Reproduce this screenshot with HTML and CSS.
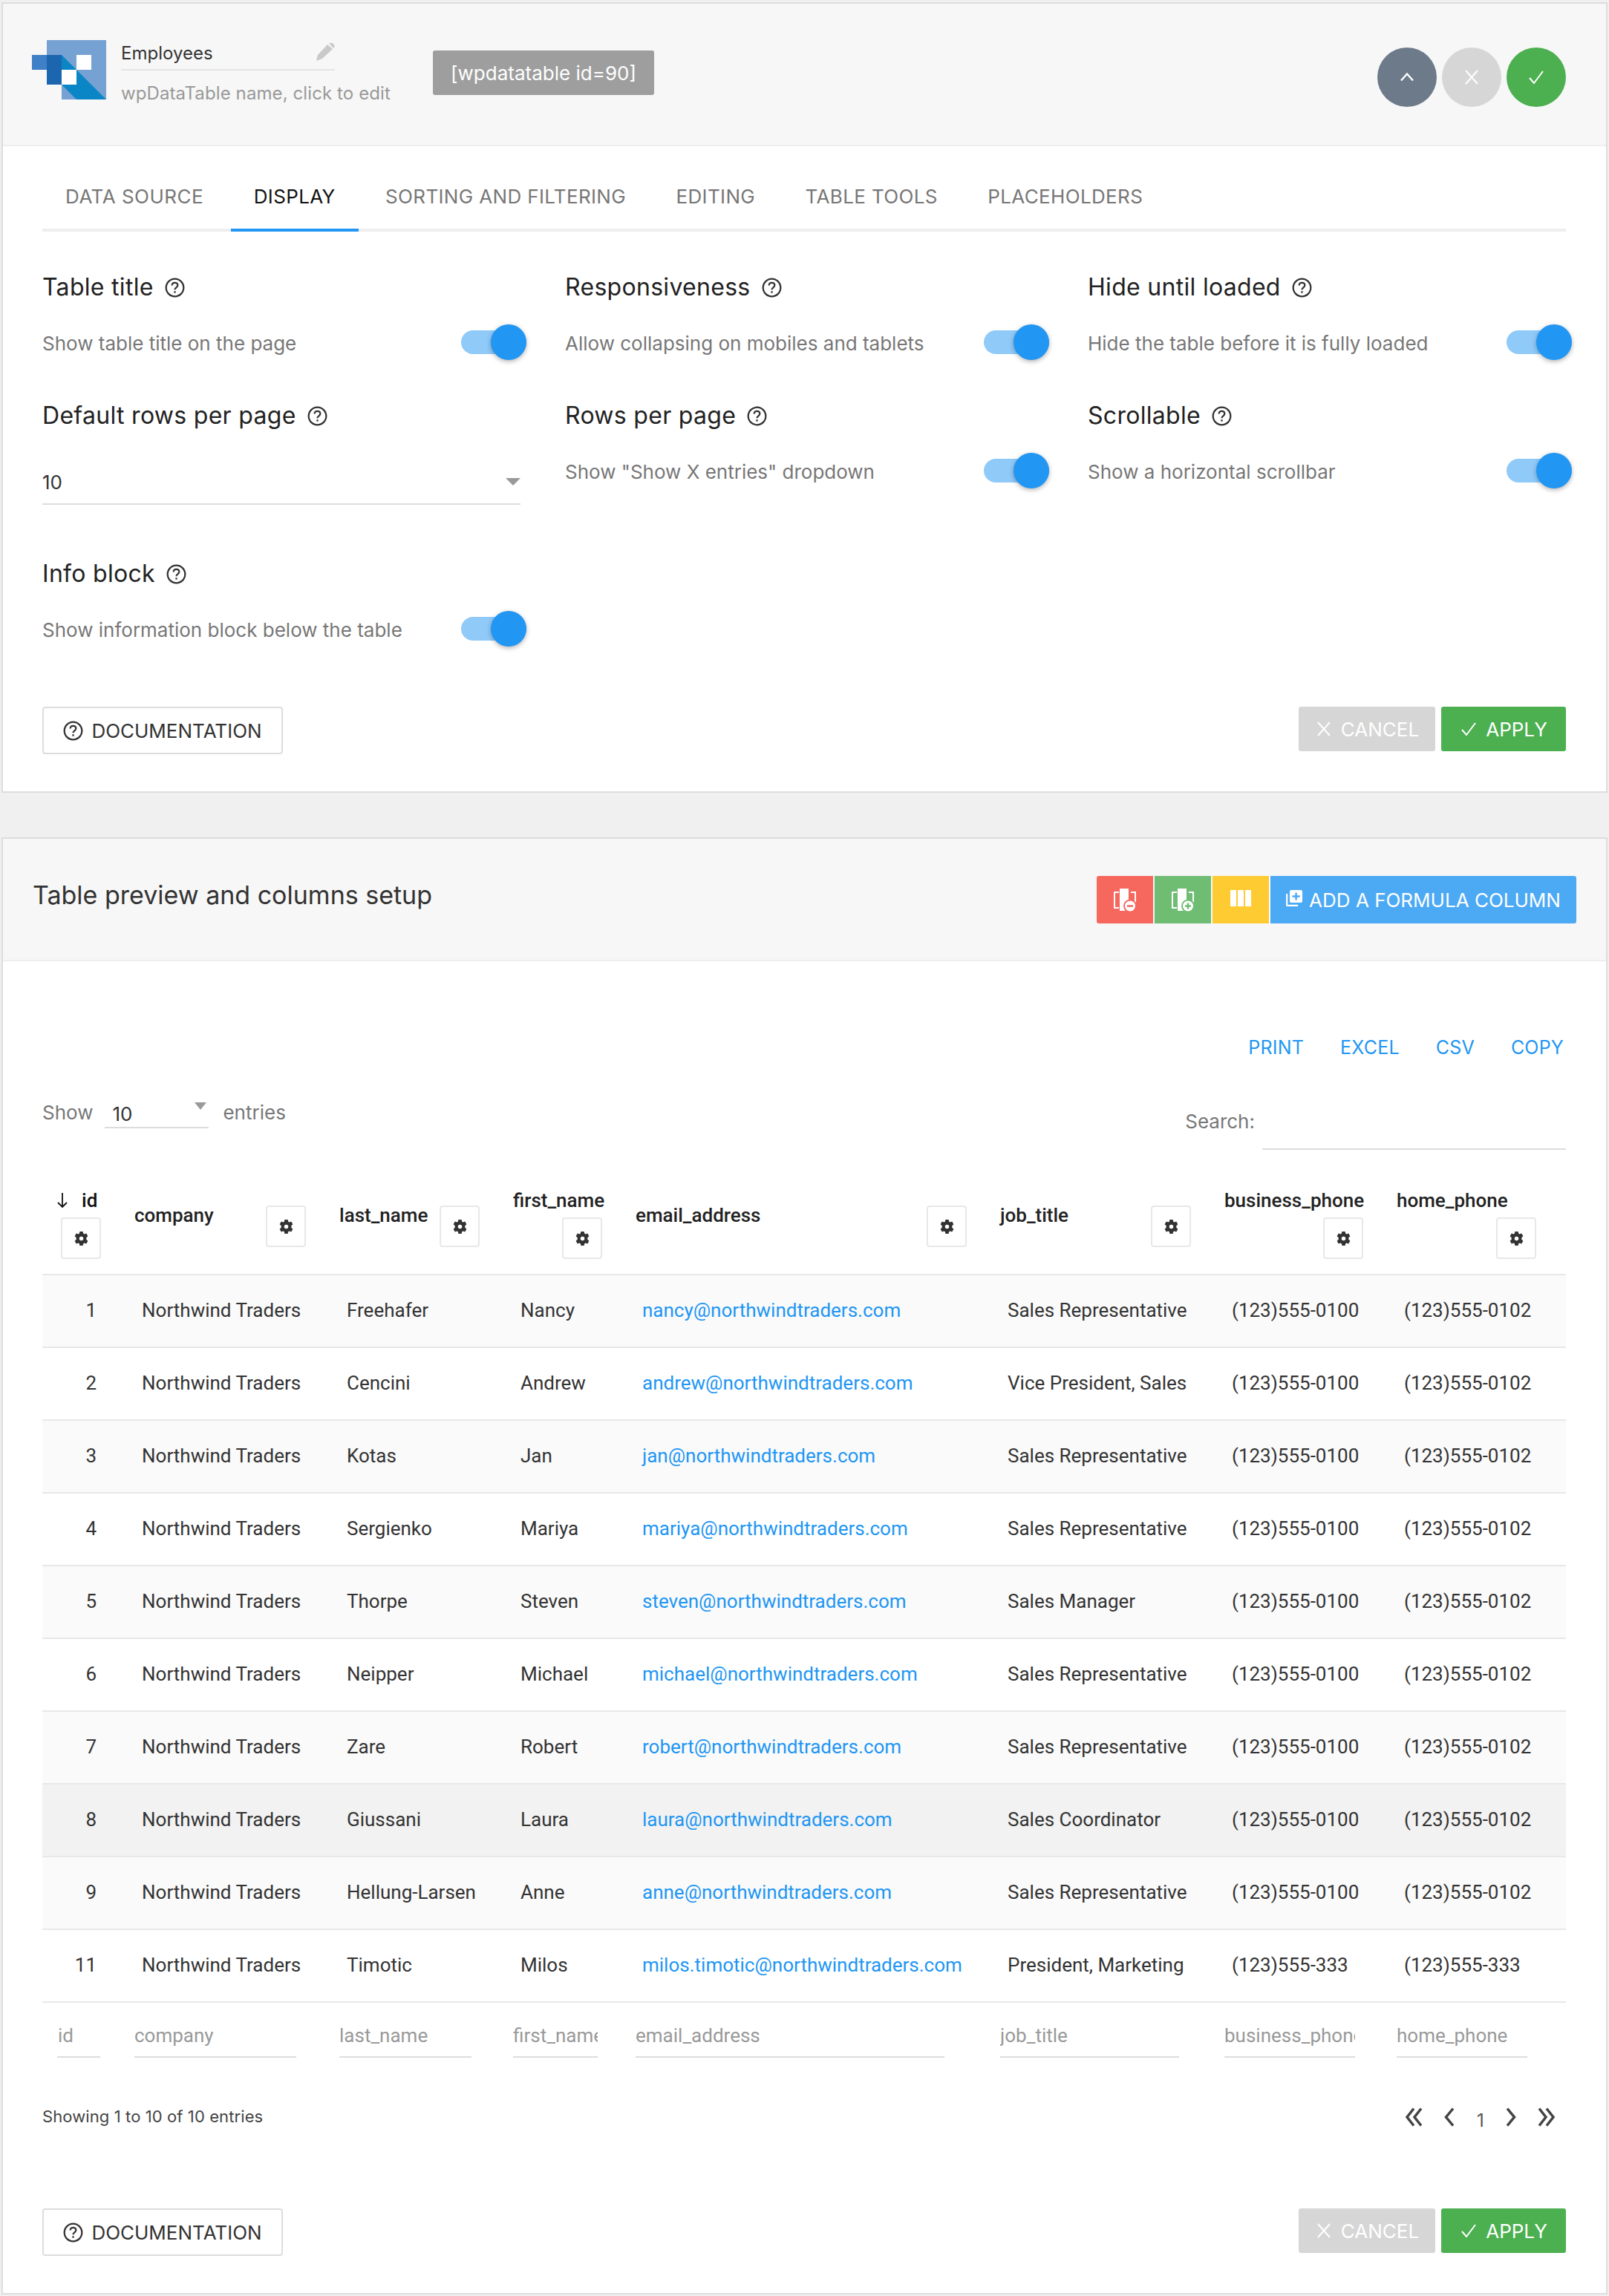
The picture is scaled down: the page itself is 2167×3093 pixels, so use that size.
FILE: index.html
```html
<!DOCTYPE html>
<html lang="en">
<head>
<meta charset="utf-8">
<title>wpDataTables</title>
<link rel="stylesheet" href="styles.css">
</head>
<body>
<svg class="defs" width="0" height="0" aria-hidden="true">
  <symbol id="help" viewBox="0 0 24 24"><circle cx="12" cy="12" r="10.5" fill="none" stroke="currentColor" stroke-width="2"/><path d="M8.6 9.4c0-2 1.5-3.2 3.4-3.2s3.4 1.2 3.4 3c0 2.6-3.4 2.6-3.4 5.2" fill="none" stroke="currentColor" stroke-width="2"/><rect x="11" y="16.2" width="2" height="2.2" fill="currentColor"/></symbol>
  <symbol id="gear" viewBox="0 0 24 24"><path fill-rule="evenodd" d="M9.300 0h5.400l.7 3.400 1.800 1 3.300-1.100 2.700 4.700-2.600 2.300v3.400l2.600 2.300-2.700 4.700-3.300-1.100-1.800 1-.7 3.400H9.300l-.7-3.400-1.800-1-3.300 1.100L.8 16l2.600-2.300v-3.400L.8 8l2.700-4.700 3.300 1.100 1.800-1zM12 8.500a3.500 3.500 0 1 0 0 7 3.500 3.500 0 0 0 0-7z"/></symbol>
  <symbol id="check" viewBox="0 0 24 24"><path d="M3 13l6 7L21 4" fill="none" stroke="currentColor" stroke-width="2"/></symbol>
  <symbol id="cross" viewBox="0 0 24 24"><path d="M4 3l16 18M20 3L4 21" fill="none" stroke="currentColor" stroke-width="2"/></symbol>
</svg>

<section class="panel panel-top">
  <header class="top-head">
    <svg class="logo" viewBox="0 0 100 80" aria-hidden="true">
      <path fill="#76a1d3" d="M20 0h80v80H40V60H20z"/>
      <path fill="#3f80c6" d="M0 20h20v20H0z"/>
      <path fill="#1c66b0" d="M20 20h20v40H20z"/>
      <path fill="#0a86c6" d="M40 20l20 20H40zM60 40l40 40H60L40 60h20z"/>
      <path fill="#fff" d="M60 20h20v20H60zM40 40h20v20H40z"/>
    </svg>
    <div class="name-box">
      <div class="name-line"><span>Employees</span>
        <svg class="pencil" viewBox="0 0 25 24" aria-hidden="true"><path fill="#c9c9c9" d="M0 24l2-8L15 2l7 6L8 21zM17 0l5 0 3 4-2 3z"/></svg>
      </div>
      <div class="name-hint">wpDataTable name, click to edit</div>
    </div>
    <div class="shortcode">[wpdatatable id=90]</div>
    <div class="round-group">
      <button class="round round-slate"><svg viewBox="0 0 24 24"><path d="M4 16.500l8-9 8 9" fill="none" stroke="#fff" stroke-width="2.400"/></svg></button>
      <button class="round round-grey"><svg viewBox="0 0 24 24"><use href="#cross"/></svg></button>
      <button class="round round-green"><svg viewBox="0 0 24 24"><use href="#check"/></svg></button>
    </div>
  </header>

  <div class="top-body">
    <nav class="tabs">
      <a class="tab">DATA SOURCE</a>
      <a class="tab tab-active">DISPLAY</a>
      <a class="tab">SORTING AND FILTERING</a>
      <a class="tab">EDITING</a>
      <a class="tab">TABLE TOOLS</a>
      <a class="tab">PLACEHOLDERS</a>
    </nav>

    <div class="settings">
      <div class="setting">
        <h4>Table title <svg class="help"><use href="#help"/></svg></h4>
        <div class="toggle-row"><span>Show table title on the page</span><i class="toggle"></i></div>
      </div>
      <div class="setting">
        <h4>Responsiveness <svg class="help"><use href="#help"/></svg></h4>
        <div class="toggle-row"><span>Allow collapsing on mobiles and tablets</span><i class="toggle"></i></div>
      </div>
      <div class="setting">
        <h4>Hide until loaded <svg class="help"><use href="#help"/></svg></h4>
        <div class="toggle-row"><span>Hide the table before it is fully loaded</span><i class="toggle"></i></div>
      </div>
      <div class="setting">
        <h4>Default rows per page <svg class="help"><use href="#help"/></svg></h4>
        <div class="select-line"><span>10</span><i class="caret"></i></div>
      </div>
      <div class="setting">
        <h4>Rows per page <svg class="help"><use href="#help"/></svg></h4>
        <div class="toggle-row"><span>Show "Show X entries" dropdown</span><i class="toggle"></i></div>
      </div>
      <div class="setting">
        <h4>Scrollable <svg class="help"><use href="#help"/></svg></h4>
        <div class="toggle-row"><span>Show a horizontal scrollbar</span><i class="toggle"></i></div>
      </div>
      <div class="setting">
        <h4>Info block <svg class="help"><use href="#help"/></svg></h4>
        <div class="toggle-row"><span>Show information block below the table</span><i class="toggle"></i></div>
      </div>
    </div>

    <div class="actions actions-top">
      <button class="btn-doc"><svg class="help"><use href="#help"/></svg>DOCUMENTATION</button>
      <div class="action-right">
        <button class="btn-cancel"><svg><use href="#cross"/></svg>CANCEL</button>
        <button class="btn-apply"><svg><use href="#check"/></svg>APPLY</button>
      </div>
    </div>
  </div>
</section>

<section class="panel panel-bottom">
  <header class="prev-head">
    <h2>Table preview and columns setup</h2>
    <div class="col-tools">
      <button class="tool tool-red"><svg viewBox="0 0 30 31"><path d="M7 5H1v21h6M23 5h6v14" fill="none" stroke="#fff" stroke-width="2"/><path fill="#fff" d="M8 0h12v30H8z"/><circle cx="22" cy="23.500" r="9" fill="#f6675d"/><circle cx="22" cy="23.500" r="7" fill="#fff"/><path d="M18 23.500h8" stroke="#f6675d" stroke-width="2.500"/></svg></button>
      <button class="tool tool-green"><svg viewBox="0 0 30 31"><path d="M7 5H1v21h6M23 5h6v14" fill="none" stroke="#fff" stroke-width="2"/><path fill="#fff" d="M8 0h12v30H8z"/><circle cx="22" cy="23.500" r="9" fill="#6fbd72"/><circle cx="22" cy="23.500" r="7" fill="#fff"/><path d="M18 23.500h8M22 19.500v8" stroke="#6fbd72" stroke-width="2.500"/></svg></button>
      <button class="tool tool-yellow"><svg viewBox="0 0 28 22"><path fill="#fff" d="M0 0h8v22H0zM10 0h8v22h-8zM20 0h8v22h-8z"/></svg></button>
      <button class="tool tool-blue"><svg viewBox="0 0 22 22"><path d="M1.200 5v15.800h15" fill="none" stroke="#fff" stroke-width="2.200" stroke-linejoin="round"/><path fill="#fff" fill-rule="evenodd" d="M7 0h13a2 2 0 0 1 2 2v13a2 2 0 0 1-2 2H7a2 2 0 0 1-2-2V2a2 2 0 0 1 2-2zM12.400 3.500v3.800H8.500v2.400h3.900v3.800h2.400V9.700h3.900V7.300h-3.900V3.500z"/></svg>ADD A FORMULA COLUMN</button>
    </div>
  </header>

  <div class="prev-body">
    <div class="exports">
      <a>PRINT</a><a>EXCEL</a><a>CSV</a><a>COPY</a>
    </div>
    <div class="table-controls">
      <div class="length">
        <span>Show</span>
        <div class="length-select"><span>10</span><i class="caret caret-high"></i></div>
        <span>entries</span>
      </div>
      <div class="search"><span>Search:</span><div class="search-input"></div></div>
    </div>

    <table class="data">
      <colgroup>
        <col class="w-id"><col class="w-company"><col class="w-last"><col class="w-first"><col class="w-email"><col class="w-job"><col class="w-bus"><col class="w-home">
      </colgroup>
      <thead>
        <tr>
          <th><div class="th-in th-id"><span class="label"><svg class="sort" viewBox="0 0 14 20"><path d="M7 0v19M1 13l6 6 6-6" fill="none" stroke="#111" stroke-width="1.800"/></svg>id</span><button class="gear"><svg><use href="#gear"/></svg></button></div></th>
          <th><div class="th-in th-low"><span class="label">company</span><button class="gear"><svg><use href="#gear"/></svg></button></div></th>
          <th><div class="th-in th-low"><span class="label">last_name</span><button class="gear"><svg><use href="#gear"/></svg></button></div></th>
          <th><div class="th-in"><span class="label">first_name</span><button class="gear"><svg><use href="#gear"/></svg></button></div></th>
          <th><div class="th-in th-low"><span class="label">email_address</span><button class="gear"><svg><use href="#gear"/></svg></button></div></th>
          <th><div class="th-in th-low"><span class="label">job_title</span><button class="gear"><svg><use href="#gear"/></svg></button></div></th>
          <th><div class="th-in"><span class="label">business_phone</span><button class="gear"><svg><use href="#gear"/></svg></button></div></th>
          <th class="th-last"><div class="th-in th-wrap"><span class="label">home_phone</span><button class="gear"><svg><use href="#gear"/></svg></button></div></th>
        </tr>
      </thead>
      <tbody>
        <tr><td class="num">1</td><td>Northwind Traders</td><td>Freehafer</td><td>Nancy</td><td><a>nancy@northwindtraders.com</a></td><td>Sales Representative</td><td>(123)555-0100</td><td>(123)555-0102</td></tr>
        <tr><td class="num">2</td><td>Northwind Traders</td><td>Cencini</td><td>Andrew</td><td><a>andrew@northwindtraders.com</a></td><td>Vice President, Sales</td><td>(123)555-0100</td><td>(123)555-0102</td></tr>
        <tr><td class="num">3</td><td>Northwind Traders</td><td>Kotas</td><td>Jan</td><td><a>jan@northwindtraders.com</a></td><td>Sales Representative</td><td>(123)555-0100</td><td>(123)555-0102</td></tr>
        <tr><td class="num">4</td><td>Northwind Traders</td><td>Sergienko</td><td>Mariya</td><td><a>mariya@northwindtraders.com</a></td><td>Sales Representative</td><td>(123)555-0100</td><td>(123)555-0102</td></tr>
        <tr><td class="num">5</td><td>Northwind Traders</td><td>Thorpe</td><td>Steven</td><td><a>steven@northwindtraders.com</a></td><td>Sales Manager</td><td>(123)555-0100</td><td>(123)555-0102</td></tr>
        <tr><td class="num">6</td><td>Northwind Traders</td><td>Neipper</td><td>Michael</td><td><a>michael@northwindtraders.com</a></td><td>Sales Representative</td><td>(123)555-0100</td><td>(123)555-0102</td></tr>
        <tr><td class="num">7</td><td>Northwind Traders</td><td>Zare</td><td>Robert</td><td><a>robert@northwindtraders.com</a></td><td>Sales Representative</td><td>(123)555-0100</td><td>(123)555-0102</td></tr>
        <tr class="row-hover"><td class="num">8</td><td>Northwind Traders</td><td>Giussani</td><td>Laura</td><td><a>laura@northwindtraders.com</a></td><td>Sales Coordinator</td><td>(123)555-0100</td><td>(123)555-0102</td></tr>
        <tr><td class="num">9</td><td>Northwind Traders</td><td>Hellung-Larsen</td><td>Anne</td><td><a>anne@northwindtraders.com</a></td><td>Sales Representative</td><td>(123)555-0100</td><td>(123)555-0102</td></tr>
        <tr><td class="num">11</td><td>Northwind Traders</td><td>Timotic</td><td>Milos</td><td><a>milos.timotic@northwindtraders.com</a></td><td>President, Marketing</td><td>(123)555-333</td><td>(123)555-333</td></tr>
      </tbody>
      <tfoot>
        <tr>
          <td><input class="f f-id" placeholder="id"></td>
          <td><input class="f f-company" placeholder="company"></td>
          <td><input class="f f-last" placeholder="last_name"></td>
          <td><input class="f f-first" placeholder="first_name"></td>
          <td><input class="f f-email" placeholder="email_address"></td>
          <td><input class="f f-job" placeholder="job_title"></td>
          <td><input class="f f-bus" placeholder="business_phone"></td>
          <td><input class="f f-home" placeholder="home_phone"></td>
        </tr>
      </tfoot>
    </table>

    <div class="table-foot">
      <div class="info">Showing 1 to 10 of 10 entries</div>
      <div class="pager">
        <svg class="pg pg-d" viewBox="0 0 24 26"><path d="M12 1.500L3 13l9 11.500M22 1.500L13 13l9 11.500" fill="none" stroke="#444" stroke-width="3.500"/></svg>
        <svg class="pg pg-s" viewBox="0 0 15 26"><path d="M13 1.500L3.500 13 13 24.500" fill="none" stroke="#444" stroke-width="3.500"/></svg>
        <span class="pg-n">1</span>
        <svg class="pg pg-s" viewBox="0 0 15 26"><path d="M2 1.500L11.500 13 2 24.500" fill="none" stroke="#444" stroke-width="3.500"/></svg>
        <svg class="pg pg-d" viewBox="0 0 24 26"><path d="M2 1.500L11 13 2 24.500M12 1.500L21 13l-9 11.500" fill="none" stroke="#444" stroke-width="3.500"/></svg>
      </div>
    </div>

    <div class="actions actions-bottom">
      <button class="btn-doc"><svg class="help"><use href="#help"/></svg>DOCUMENTATION</button>
      <div class="action-right">
        <button class="btn-cancel"><svg><use href="#cross"/></svg>CANCEL</button>
        <button class="btn-apply"><svg><use href="#check"/></svg>APPLY</button>
      </div>
    </div>
  </div>
</section>
</body>
</html>
```
FILE: styles.css
```css
* { box-sizing: border-box; }
html, body { margin: 0; padding: 0; }
body {
  background: #f0f0f0;
  font-family: "Inter", "Liberation Sans", sans-serif;
  color: #333;
  padding: 3px 2px 2px;
  width: 2167px;
}
.defs { position: absolute; }
button { font-family: inherit; border: 0; padding: 0; cursor: pointer; }
.panel { background: #fff; border: 2px solid #ddd; width: 2163px; }
.panel-top { height: 1065px; }
.panel-bottom { margin-top: 60px; height: 1963px; }

/* top header */
.top-head {
  height: 192px;
  background: #f7f7f7;
  border-bottom: 2px solid #eee;
  display: flex;
  align-items: flex-start;
  padding: 49px 54px 0 39px;
}
.logo { width: 100px; height: 80px; flex: none; }
.name-box { width: 288px; margin: -1px 0 0 20px; }
.name-line {
  height: 42px;
  border-bottom: 2px solid #e4e4e4;
  display: flex;
  justify-content: space-between;
  font-size: 24px;
  color: #333;
  padding-top: 4px;
}
.pencil { width: 25px; height: 24px; margin-top: 1px; }
.name-hint { font-size: 24px; letter-spacing: .1px; color: #999; margin-top: 16px; white-space: nowrap; }
.shortcode {
  margin: 14px 0 0 132px;
  width: 298px; height: 60px;
  background: #9e9e9e;
  border-radius: 3px;
  color: #fff;
  font-size: 26px;
  display: flex; align-items: center; justify-content: center;
  white-space: nowrap;
}
.round-group { margin-left: auto; margin-top: 10px; display: flex; gap: 7px; }
.round { width: 80px; height: 80px; border-radius: 50%; display: flex; align-items: center; justify-content: center; color: #fff; }
.round svg { width: 24px; height: 24px; }
.round-slate { background: #6d7a8a; }
.round-grey { background: #d6d6d6; }
.round-green { background: #4caf50; }

/* tabs */
.top-body { padding: 0 54px 0 53px; }
.tabs {
  display: flex;
  gap: 5.500px;
  height: 115px;
  border-bottom: 4px solid #eee;
  padding-top: 38px;
}
.tab {
  display: block;
  height: 77px;
  padding: 14px 31px 0;
  font-size: 26px;
  letter-spacing: .35px;
  color: #777;
  white-space: nowrap;
}
.tab:first-child { letter-spacing: .5px; }
.tab-active { color: #111; border-bottom: 4px solid #2196f3; }

/* settings */
.settings {
  display: grid;
  grid-template-columns: repeat(3, 704px);
  margin-top: 55px;
  align-items: start;
}
h4 {
  margin: 0;
  font-weight: 400;
  font-size: 32px;
  letter-spacing: .3px;
  color: #222;
  height: 40px;
  line-height: 40px;
  display: flex;
  align-items: center;
  gap: 15px;
}
.help { width: 27px; height: 27px; color: #333; }
.setting { min-height: 173px; }
.toggle-row {
  width: 652px;
  margin-top: 30px;
  height: 50px;
  display: flex;
  justify-content: space-between;
  align-items: center;
  font-size: 26px;
  color: #777;
  white-space: nowrap;
}
.toggle { position: relative; display: block; width: 88px; height: 32px; background: #90caf9; border-radius: 16px; flex: none; margin-top: -3px; }
.toggle::after {
  content: "";
  position: absolute;
  right: 0; top: -8px;
  width: 48px; height: 48px;
  background: #2196f3;
  border-radius: 50%;
  box-shadow: 0 2px 6px rgba(0,0,0,.3);
}
.select-line {
  width: 644px;
  height: 68px;
  margin-top: 32px;
  margin-bottom: 73px;
  border-bottom: 2px solid #ddd;
  display: flex;
  align-items: center;
  justify-content: space-between;
  font-size: 26px;
  color: #333;
  padding-top: 8px;
}
.caret { width: 0; height: 0; border-left: 10px solid transparent; border-right: 10px solid transparent; border-top: 10px solid #999; display: block; }
.caret-high { position: absolute; right: 3px; top: 3px; border-left-width: 8px; border-right-width: 8px; }

/* actions */
.actions { display: flex; justify-content: space-between; }
.actions-top { margin-top: 26px; }
.btn-doc {
  width: 324px; height: 64px;
  background: #fff;
  border: 2px solid #ddd;
  border-radius: 4px;
  font-size: 26px;
  color: #333;
  display: flex; align-items: center; justify-content: center; gap: 11px;
}
.action-right { display: flex; gap: 8px; }
.btn-cancel, .btn-apply {
  height: 60px;
  border-radius: 3px;
  color: #fff;
  font-size: 26px;
  display: flex; align-items: center; justify-content: center; gap: 11px;
}
.btn-cancel svg, .btn-apply svg { width: 24px; height: 24px; }
.btn-cancel { width: 184px; background: #d6d6d6; }
.btn-apply { width: 168px; background: #4caf50; }

/* preview header */
.prev-head {
  height: 165px;
  background: #f7f7f7;
  border-bottom: 2px solid #eee;
  display: flex;
  justify-content: space-between;
  padding: 50px 40px 0 40px;
}
.prev-head h2 { margin: -2px 0 0; font-weight: 400; font-size: 34px; color: #333; line-height: 56px; height: 56px; }
.col-tools { display: flex; gap: 2px; height: 64px; }
.tool { width: 76px; height: 64px; display: flex; align-items: center; justify-content: center; color: #fff; }
.tool svg { width: 30px; height: 31px; }
.tool-red { background: #f6675d; border-radius: 3px 0 0 3px; }
.tool-green { background: #6fbd72; }
.tool-yellow { background: #ffcb33; }
.tool-yellow svg { width: 28px; height: 22px; margin-top: -4px; }
.tool-blue { width: 412px; background: #4ca9f4; border-radius: 0 3px 3px 0; font-size: 26px; gap: 9px; white-space: nowrap; }
.tool-blue svg { width: 22px; height: 22px; margin-top: -4px; }

/* controls */
.prev-body { padding: 0 54px 0 53px; }
.exports { display: flex; justify-content: flex-end; gap: 49px; padding: 98px 3px 0 0; height: 162px; font-size: 25px; letter-spacing: .2px; color: #2196f3; line-height: 36px; }
.table-controls { display: flex; justify-content: space-between; height: 142px; align-items: flex-start; }
.length { display: flex; align-items: flex-start; font-size: 26px; color: #777; padding-top: 25px; line-height: 34px; }
.length-select { position: relative; width: 140px; height: 38px; margin: 0 19px 0 16px; border-bottom: 2px solid #ddd; color: #333; padding: 2px 0 0 10px; }
.search { display: flex; font-size: 26px; color: #777; padding-top: 36px; align-items: flex-start; line-height: 36px; }
.search-input { width: 409px; height: 56px; margin-left: 10px; border-bottom: 2px solid #ddd; }

/* table */
.data { border-collapse: collapse; table-layout: fixed; width: 2052px; font-family: "Roboto", "Liberation Sans", sans-serif; font-size: 26px; color: #333; }
.w-id { width: 104px; } .w-company { width: 276px; } .w-last { width: 234px; } .w-first { width: 165px; }
.w-email { width: 491px; } .w-job { width: 302px; } .w-bus { width: 232px; } .w-home { width: 248px; }
.data th { padding: 0 25px 20px 20px; font-weight: 500; text-align: left; vertical-align: top; border-bottom: 2px solid #e8e8e8; color: #222; }
.data th.th-last { padding-right: 40px; }
.th-in { display: flex; flex-wrap: wrap; justify-content: space-between; align-items: flex-start; line-height: 36px; }
.th-low { padding-top: 20px; }
.th-in .label { white-space: nowrap; }
.th-wrap { width: 100%; }
.th-id .label { display: flex; align-items: center; gap: 19px; color: #111; }
.sort { width: 14px; height: 20px; }
.gear {
  width: 54px; height: 56px;
  margin-left: auto;
  margin-top: 5px;
  background: #fff;
  border: 2px solid #e8e8e8;
  border-radius: 4px;
  display: flex; align-items: center; justify-content: center;
}
.gear svg { width: 19px; height: 19px; fill: #333; }
.data tbody td { height: 98px; padding: 0 0 2px 30px; border-bottom: 2px solid #e8e8e8; white-space: nowrap; overflow: hidden; }
.data tbody td.num { padding: 0 31px 2px 0; text-align: right; }
.data tbody tr:nth-child(odd) { background: #fafafa; }
.data tbody tr.row-hover { background: #f2f2f2; }
.data tbody a { color: #2196f3; margin-left: -1px; }
.data tfoot td { padding: 24px 0 0 20px; height: 74px; vertical-align: top; }
.f {
  display: block;
  height: 50px;
  border: 0;
  border-bottom: 2px solid #ddd;
  background: none;
  outline: 0;
  padding: 0 0 9px;
  font: inherit;
  font-size: 26px;
  color: #333;
  width: 100%;
}
.f::placeholder { color: #999; opacity: 1; }
.f-id { width: 58px; padding-left: 1px; } .f-company { width: 218px; } .f-last { width: 178px; } .f-first { width: 114px; }
.f-email { width: 416px; } .f-job { width: 241px; } .f-bus { width: 176px; } .f-home { width: 176px; }

.table-foot { display: flex; justify-content: space-between; align-items: flex-start; margin-top: 61px; height: 142px; }
.info { font-size: 22px; letter-spacing: .1px; color: #444; line-height: 36px; }
.pager { display: flex; align-items: flex-start; margin: 6px 14px 0 0; }
.pg { height: 26px; display: block; }
.pg-d { width: 24px; }
.pg-s { width: 15px; }
.pager .pg-d:first-child { margin-right: 28px; }
.pager .pg-d:last-child { margin-left: 28px; }
.pg-n { font-family: "Inter", sans-serif; font-size: 24px; color: #555; margin: 3px 31px 0 30px; width: 8px; }
```
